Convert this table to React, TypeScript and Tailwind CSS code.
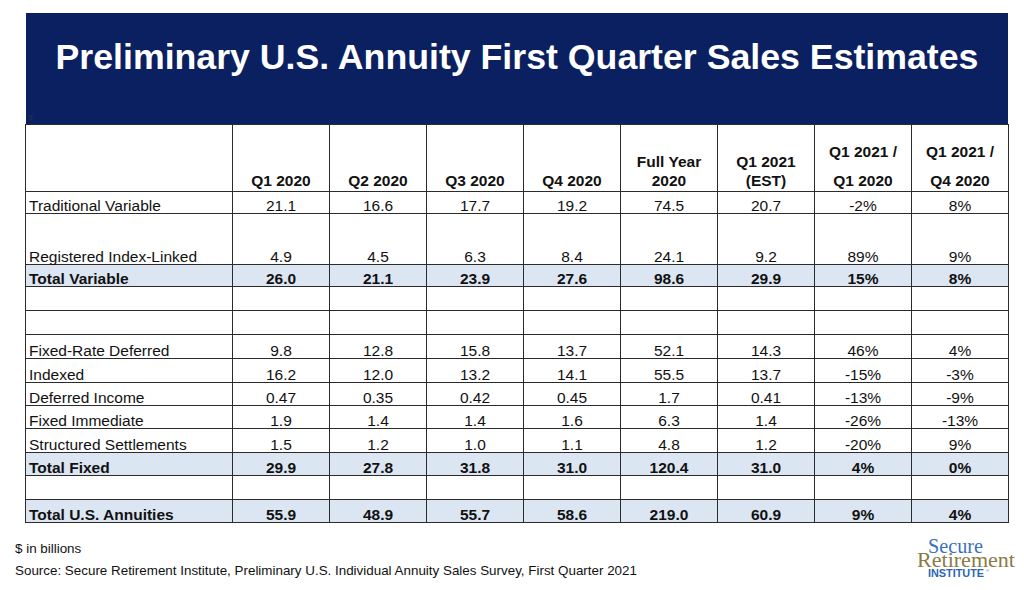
import React from "react";

type Row = {
  label: string;
  values: string[];
  h: string;
  total?: boolean;
};

const rows: Row[] = [
  { label: "Traditional Variable", values: ["21.1", "16.6", "17.7", "19.2", "74.5", "20.7", "-2%", "8%"], h: "h-[22px]" },
  { label: "Registered Index-Linked", values: ["4.9", "4.5", "6.3", "8.4", "24.1", "9.2", "89%", "9%"], h: "h-[51px]" },
  { label: "Total Variable", values: ["26.0", "21.1", "23.9", "27.6", "98.6", "29.9", "15%", "8%"], h: "h-[22px]", total: true },
  { label: "", values: ["", "", "", "", "", "", "", ""], h: "h-[24px]" },
  { label: "", values: ["", "", "", "", "", "", "", ""], h: "h-[24px]" },
  { label: "Fixed-Rate Deferred", values: ["9.8", "12.8", "15.8", "13.7", "52.1", "14.3", "46%", "4%"], h: "h-[24px]" },
  { label: "Indexed", values: ["16.2", "12.0", "13.2", "14.1", "55.5", "13.7", "-15%", "-3%"], h: "h-[24px]" },
  { label: "Deferred Income", values: ["0.47", "0.35", "0.42", "0.45", "1.7", "0.41", "-13%", "-9%"], h: "h-[23px]" },
  { label: "Fixed Immediate", values: ["1.9", "1.4", "1.4", "1.6", "6.3", "1.4", "-26%", "-13%"], h: "h-[23px]" },
  { label: "Structured Settlements", values: ["1.5", "1.2", "1.0", "1.1", "4.8", "1.2", "-20%", "9%"], h: "h-[24px]" },
  { label: "Total Fixed", values: ["29.9", "27.8", "31.8", "31.0", "120.4", "31.0", "4%", "0%"], h: "h-[23px]", total: true },
  { label: "", values: ["", "", "", "", "", "", "", ""], h: "h-[24px]" },
  { label: "Total U.S. Annuities", values: ["55.9", "48.9", "55.7", "58.6", "219.0", "60.9", "9%", "4%"], h: "h-[23px]", total: true },
];

const headers: { lines: string[]; tall?: boolean }[] = [
  { lines: ["Q1 2020"] },
  { lines: ["Q2 2020"] },
  { lines: ["Q3 2020"] },
  { lines: ["Q4 2020"] },
  { lines: ["Full Year", "2020"] },
  { lines: ["Q1 2021", "(EST)"] },
  { lines: ["Q1 2021 /", "Q1 2020"], tall: true },
  { lines: ["Q1 2021 /", "Q4 2020"], tall: true },
];

function Logo() {
  return (
    <svg width="104" height="54" viewBox="0 -8 104 54" className="block">
      <text
        x="12"
        y="17"
        fontFamily='"Liberation Serif", "Times New Roman", serif'
        fontSize="22"
        fill="#3a71ba"
        textLength="55"
        lengthAdjust="spacingAndGlyphs"
      >
        Secure
      </text>
      <text
        x="1"
        y="31"
        fontFamily='"Liberation Serif", "Times New Roman", serif'
        fontSize="22"
        fill="#8b7b45"
        textLength="98"
        lengthAdjust="spacingAndGlyphs"
      >
        Retirement
      </text>
      <text
        x="12"
        y="41"
        fontFamily='"Liberation Sans", Arial, sans-serif'
        fontSize="11"
        fontWeight="bold"
        fill="#2a67b1"
        textLength="56"
        lengthAdjust="spacingAndGlyphs"
      >
        INSTITUTE
      </text>
      <text x="70" y="35.5" fontFamily='"Liberation Sans", Arial, sans-serif' fontSize="4" fill="#2a67b1">
        ®
      </text>
    </svg>
  );
}

export default function App() {
  return (
    <div
      className="w-[1024px] h-[590px] bg-white overflow-hidden text-[#111]"
      style={{ fontFamily: '"Liberation Sans", Arial, sans-serif' }}
    >
      {/* Header band */}
      <div className="ml-[26px] mt-[13px] w-[982px] h-[111px] bg-[#0b2060] flex flex-col">
        <div className="pt-[30px] text-center text-white font-bold text-[35.7px] leading-[28px]">
          Preliminary U.S. Annuity First Quarter Sales Estimates
        </div>
        <div className="mt-auto pl-[2px] text-[8px] leading-[10px] text-[#2a2f45] pb-[1px]">$</div>
      </div>

      {/* Table */}
      <div className="ml-[25px] w-[984px] grid grid-cols-[207px_repeat(8,97px)] border-l border-t border-[#2b2b2b] text-[15.5px]">
        <div className="h-[67px] border-r border-b border-[#2b2b2b]" />
        {headers.map((hd, i) => (
          <div
            key={i}
            className="h-[67px] border-r border-b border-[#2b2b2b] flex flex-col items-center justify-end font-bold leading-[19px] pb-[1px]"
          >
            {hd.lines.map((l, j) => (
              <span key={j} className={hd.tall && j === 0 ? "mb-[10px]" : ""}>
                {l}
              </span>
            ))}
          </div>
        ))}

        {rows.map((r, ri) => (
          <React.Fragment key={ri}>
            <div
              className={`${r.h} border-r border-b border-[#2b2b2b] flex items-end pl-[3px] leading-[15px] ${r.total ? "bg-[#dce6f2] font-bold" : ""}`}
            >
              {r.label}
            </div>
            {r.values.map((v, vi) => (
              <div
                key={vi}
                className={`${r.h} border-r border-b border-[#2b2b2b] flex items-end justify-center leading-[15px] ${r.total ? "bg-[#dce6f2] font-bold" : ""}`}
              >
                {v}
              </div>
            ))}
          </React.Fragment>
        ))}
      </div>

      {/* Footer */}
      <div className="flex justify-between items-start">
        <div className="pl-[15px] mt-[15px] text-[13.4px] leading-[22px] text-[#111]">
          <div>$ in billions</div>
          <div>Source: Secure Retirement Institute, Preliminary U.S. Individual Annuity Sales Survey, First Quarter 2021</div>
        </div>
        <div className="mr-[4px] mt-[5px]">
          <Logo />
        </div>
      </div>
    </div>
  );
}
